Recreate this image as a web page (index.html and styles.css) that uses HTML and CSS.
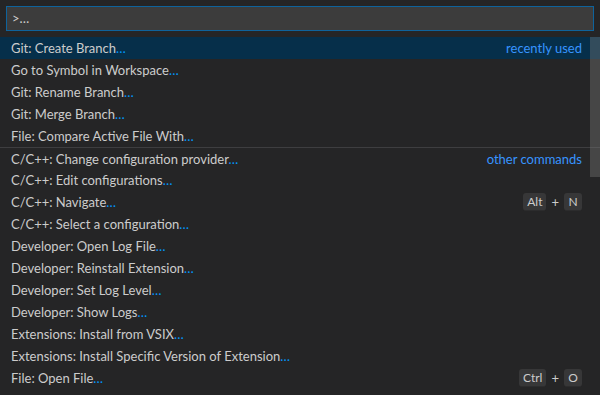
FILE: index.html
```html
<!DOCTYPE html>
<html>
<head>
<meta charset="utf-8">
<link rel="stylesheet" href="styles.css">
</head>
<body>
<div class="palette">
  <div class="input-wrap">
    <div class="input">&gt;…</div>
  </div>
  <div class="list">
    <div class="row selected"><span class="label">Git: Create Branch<span class="hl">…</span></span><span class="desc">recently used</span></div>
    <div class="row"><span class="label">Go to Symbol in Workspace<span class="hl">…</span></span></div>
    <div class="row"><span class="label">Git: Rename Branch<span class="hl">…</span></span></div>
    <div class="row"><span class="label">Git: Merge Branch<span class="hl">…</span></span></div>
    <div class="row"><span class="label">File: Compare Active File With<span class="hl">…</span></span></div>
    <div class="row sep"><span class="label">C/C++: Change configuration provider<span class="hl">…</span></span><span class="desc">other commands</span></div>
    <div class="row"><span class="label">C/C++: Edit configurations<span class="hl">…</span></span></div>
    <div class="row"><span class="label">C/C++: Navigate<span class="hl">…</span></span><span class="keys"><kbd>Alt</kbd><span class="plus">+</span><kbd>N</kbd></span></div>
    <div class="row"><span class="label">C/C++: Select a configuration<span class="hl">…</span></span></div>
    <div class="row"><span class="label">Developer: Open Log File<span class="hl">…</span></span></div>
    <div class="row"><span class="label">Developer: Reinstall Extension<span class="hl">…</span></span></div>
    <div class="row"><span class="label">Developer: Set Log Level<span class="hl">…</span></span></div>
    <div class="row"><span class="label">Developer: Show Logs<span class="hl">…</span></span></div>
    <div class="row"><span class="label">Extensions: Install from VSIX<span class="hl">…</span></span></div>
    <div class="row"><span class="label">Extensions: Install Specific Version of Extension<span class="hl">…</span></span></div>
    <div class="row"><span class="label">File: Open File<span class="hl">…</span></span><span class="keys"><kbd>Ctrl</kbd><span class="plus">+</span><kbd>O</kbd></span></div>
    <div class="scrollbar"></div>
  </div>
</div>
</body>
</html>
```
FILE: styles.css
```css
html, body {
  margin: 0;
  padding: 0;
  background: #252526;
}
.palette {
  width: 600px;
  height: 395px;
  overflow: hidden;
  background: #252526;
  font-family: "Lato", "Noto Sans", sans-serif;
  font-size: 13px;
  color: #cccccc;
}
.input-wrap {
  padding: 6px 6px 6px 6px;
}
.input {
  height: 23px;
  border: 1px solid #0e639c;
  background: #3c3c3c;
  line-height: 23px;
  padding-left: 5px;
  font-size: 13px;
  color: #cccccc;
}
.list {
  position: relative;
}
.row {
  height: 22px;
  line-height: 22px;
  display: flex;
  justify-content: space-between;
  align-items: center;
  padding: 0 18px 0 11px;
  white-space: nowrap;
  box-sizing: border-box;
}
.row.selected {
  background: #062f4a;
}
.row.sep {
  border-top: 1px solid #3e3e40;
}
.hl {
  color: #0097fb;
}
.desc {
  color: #3794ff;
}
.keys {
  display: flex;
  align-items: center;
}
kbd {
  font-family: inherit;
  font-size: 12px;
  background: #373738;
  border-radius: 3px;
  border-bottom: 1px solid #2c2c2d;
  color: #cccccc;
  height: 17px;
  line-height: 17px;
  padding: 0 4px;
  min-width: 10px;
  text-align: center;
}
.plus {
  padding: 0 5px;
}
.scrollbar {
  position: absolute;
  right: 0;
  top: 0;
  width: 10px;
  height: 140px;
  background: rgba(121, 121, 121, 0.4);
}
```
